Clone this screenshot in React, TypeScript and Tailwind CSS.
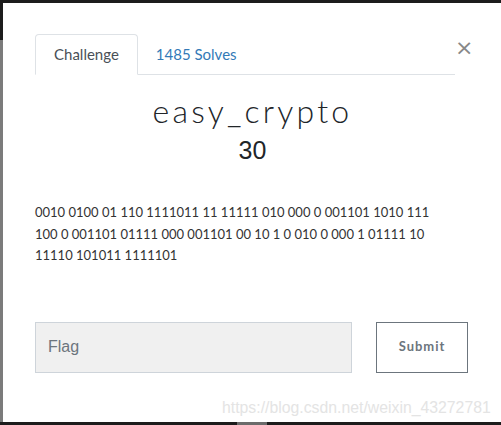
import { useState } from "react";

const DESCRIPTION =
  "0010 0100 01 110 1111011 11 11111 010 000 0 001101 1010 111 100 0 001101 01111 000 001101 00 10 1 0 010 0 000 1 01111 10 11110 101011 1111101";

export default function App() {
  const [tab, setTab] = useState<"challenge" | "solves">("challenge");
  const [flag, setFlag] = useState("");

  return (
    <div className="w-[501px] h-[425px] bg-[#1c1c1c] flex flex-col overflow-hidden">
      <div className="flex flex-1">
        <div className="w-[3px] shrink-0 flex flex-col">
          <div className="h-[40px] bg-[#1c1c1c]" />
          <div className="flex-1 bg-[#7b7b7b]" />
        </div>
        <div className="flex-1 min-w-0 mt-[3px] bg-white relative">
          <div className="pl-[32px] pr-[31px] pt-[31px]">
            <div className="flex items-start">
              <ul className="flex shrink-0 w-[420px] border-b border-[#dee2e6] font-['Lato',sans-serif] text-[15px]">
                <li>
                  <button
                    onClick={() => setTab("challenge")}
                    className={`h-[41px] px-[18px] -mb-px border rounded-t-[4px] ${
                      tab === "challenge"
                        ? "border-[#dee2e6] border-b-white bg-white text-[#495057]"
                        : "border-transparent text-[#337ab7]"
                    }`}
                  >
                    Challenge
                  </button>
                </li>
                <li>
                  <button
                    onClick={() => setTab("solves")}
                    className={`h-[41px] px-[17px] -mb-px border rounded-t-[4px] ${
                      tab === "solves"
                        ? "border-[#dee2e6] border-b-white bg-white text-[#495057]"
                        : "border-transparent text-[#337ab7]"
                    }`}
                  >
                    1485 Solves
                  </button>
                </li>
              </ul>
              <button className="ml-auto mt-[3px] text-[#888] text-[22px] leading-none font-['DejaVu_Sans',sans-serif]">
                ×
              </button>
            </div>

            <h3 className="mt-[18px] text-center text-[32px] leading-[36px] font-light tracking-[3.2px] text-[#212529] font-['Lato',sans-serif]">
              easy_crypto
            </h3>
            <h4 className="mt-[6px] text-center text-[25px] leading-[30px] text-[#212529] font-['Liberation_Sans',sans-serif]">
              30
            </h4>

            <p className="mt-[37px] w-[420px] text-[13px] leading-[21.5px] text-[#333] font-['Lato',sans-serif]">
              {DESCRIPTION}
            </p>

            <div className="mt-[55px] flex gap-[24px] w-[433px]">
              <input
                value={flag}
                onChange={(e) => setFlag(e.target.value)}
                placeholder="Flag"
                className="w-[317px] h-[51px] px-[12px] bg-[#f0f0f0] border border-[#ced4da] text-[16px] text-[#495057] placeholder:text-[#6c757d] font-['Liberation_Sans',sans-serif] outline-none"
              />
              <button className="w-[92px] h-[51px] border border-[#6c757d] text-[#6c757d] text-[13px] font-bold tracking-[1px] font-['Lato',sans-serif]">
                Submit
              </button>
            </div>
          </div>
          <span className="absolute left-[219px] top-[396px] text-[15.8px] leading-[18px] text-[#e4e4e4] font-['Liberation_Sans',sans-serif] whitespace-nowrap">
            https://blog.csdn.net/weixin_43272781
          </span>
        </div>
      </div>
      <div className="h-[3px] flex">
        <div className="w-[237px]" />
        <div className="w-[30px] bg-[#6b6b6b]" />
      </div>
    </div>
  );
}
